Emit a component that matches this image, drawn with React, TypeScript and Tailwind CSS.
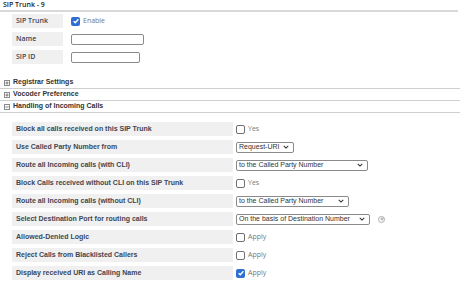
import React from 'react';

const sans = { fontFamily: '"Open Sans", "Liberation Sans", sans-serif' };
const arial = { fontFamily: '"Liberation Sans", Arial, sans-serif' };

function Check({ checked = false }: { checked?: boolean }) {
  if (checked) {
    return (
      <span className="inline-flex h-[9px] w-[9px] shrink-0 items-center justify-center rounded-[2px] bg-[#2f6fd3]">
        <svg viewBox="0 0 10 10" className="h-[8px] w-[8px]">
          <path d="M2 5.2 L4.1 7.2 L8 2.8" fill="none" stroke="#fff" strokeWidth="1.7" />
        </svg>
      </span>
    );
  }
  return <span className="inline-block h-[9px] w-[9px] shrink-0 rounded-[2px] border border-[#6f6f6f] bg-white" />;
}

function Select({ text, width }: { text: string; width: string }) {
  return (
    <div
      className={`flex h-[11px] items-center justify-between rounded-[2px] border border-[#8a8a8a] bg-white pl-[2px] pr-[4px] text-[7px] text-[#333] ${width}`}
      style={arial}
    >
      <span>{text}</span>
      <svg viewBox="0 0 8 5" className="h-[4px] w-[6px]">
        <path d="M1 1 L4 4 L7 1" fill="none" stroke="#333" strokeWidth="1.4" />
      </svg>
    </div>
  );
}

function CheckLabel({ checked, label }: { checked?: boolean; label: string }) {
  return (
    <div className="flex items-center gap-[3px]">
      <Check checked={checked} />
      <span className="text-[7px] text-[#777]" style={sans}>
        {label}
      </span>
    </div>
  );
}

function Section({ title, open }: { title: string; open?: boolean }) {
  return (
    <div className="flex h-[12px] w-[460px] items-center gap-[3px] border-b border-[#cfcfcf] pl-[4px]">
      <span className="flex h-[6px] w-[6px] items-center justify-center border border-[#8a8a8a] bg-white">
        <svg viewBox="0 0 6 6" className="h-[4px] w-[4px]">
          <path d={open ? 'M0.5 3 H5.5' : 'M0.5 3 H5.5 M3 0.5 V5.5'} stroke="#444" strokeWidth="1" />
        </svg>
      </span>
      <span className="text-[7px] font-bold text-[#333]" style={arial}>
        {title}
      </span>
    </div>
  );
}

const rows: { label: string; value: React.ReactNode }[] = [
  { label: 'Block all calls received on this SIP Trunk', value: <CheckLabel label="Yes" /> },
  { label: 'Use Called Party Number from', value: <Select text="Request-URI" width="w-[58px]" /> },
  { label: 'Route all Incoming calls (with CLI)', value: <Select text="to the Called Party Number" width="w-[132px]" /> },
  { label: 'Block Calls received without CLI on this SIP Trunk', value: <CheckLabel label="Yes" /> },
  { label: 'Route all Incoming calls (without CLI)', value: <Select text="to the Called Party Number" width="w-[113px]" /> },
  {
    label: 'Select Destination Port for routing calls',
    value: (
      <div className="flex items-center gap-[8px]">
        <Select text="On the basis of Destination Number" width="w-[134px]" />
        <span className="flex h-[7px] w-[7px] items-center justify-center rounded-full border border-[#aaa]">
          <svg viewBox="0 0 6 6" className="h-[4px] w-[4px]">
            <path d="M0.5 3 H5.5 M3 0.5 V5.5" stroke="#888" strokeWidth="1" />
          </svg>
        </span>
      </div>
    ),
  },
  { label: 'Allowed-Denied Logic', value: <CheckLabel label="Apply" /> },
  { label: 'Reject Calls from Blacklisted Callers', value: <CheckLabel label="Apply" /> },
  { label: 'Display received URI as Calling Name', value: <CheckLabel checked label="Apply" /> },
];

export default function App() {
  return (
    <div className="h-[292px] w-[474px] overflow-hidden bg-white">
      <div
        className="flex h-[12px] w-[458px] items-center border-b-2 border-[#d9d9d9] pl-[3px] text-[7px] font-semibold text-[#222]"
        style={sans}
      >
        SIP Trunk - 9
      </div>

      <div className="mt-[2px] ml-[12px] flex flex-col gap-[4px]">
        <div className="flex h-[14px] items-center gap-[8px]">
          <div className="flex h-full w-[51px] items-center bg-[#f0f0f0] pl-[4px] text-[7px] font-semibold text-[#3d4654]" style={sans}>
            SIP Trunk
          </div>
          <CheckLabel checked label="Enable" />
        </div>
        <div className="flex h-[14px] items-center gap-[8px]">
          <div className="flex h-full w-[51px] items-center bg-[#f0f0f0] pl-[4px] text-[7px] font-semibold text-[#3d4654]" style={sans}>
            Name
          </div>
          <div className="h-[11px] w-[73px] rounded-[2px] border border-[#8a8a8a] bg-white" />
        </div>
        <div className="flex h-[14px] items-center gap-[8px]">
          <div className="flex h-full w-[51px] items-center bg-[#f0f0f0] pl-[4px] text-[7px] font-semibold text-[#3d4654]" style={sans}>
            SIP ID
          </div>
          <div className="h-[11px] w-[69px] rounded-[2px] border border-[#8a8a8a] bg-white" />
        </div>
      </div>

      <div className="mt-[13px] flex flex-col">
        <Section title="Registrar Settings" />
        <Section title="Vocoder Preference" />
        <Section title="Handling of Incoming Calls" open />
      </div>

      <div className="mt-[9px] ml-[12px] flex flex-col gap-[4px]">
        {rows.map((r) => (
          <div key={r.label} className="flex h-[14px] items-center gap-[3px]">
            <div className="flex h-full w-[221px] items-center bg-[#f0f0f0] pl-[4px] text-[7px] font-bold text-[#3d4654]" style={arial}>
              {r.label}
            </div>
            {r.value}
          </div>
        ))}
      </div>
    </div>
  );
}
